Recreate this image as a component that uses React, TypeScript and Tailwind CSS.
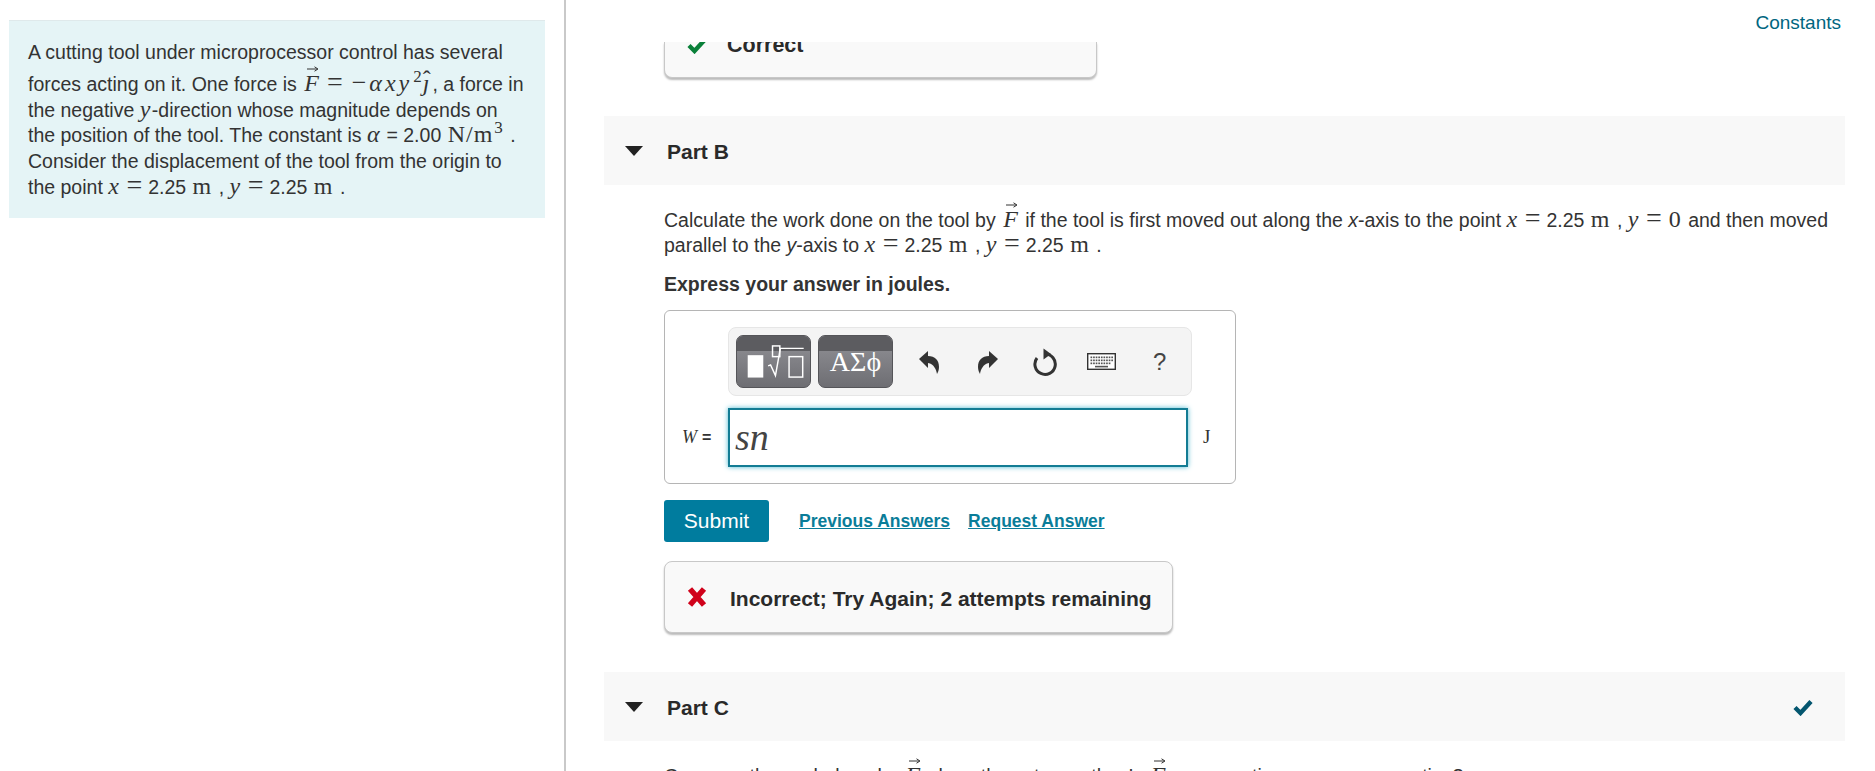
import { ReactNode } from 'react';

const SERIF = "font-['Liberation_Serif',serif]";

function V({ children }: { children: ReactNode }) {
  return <span className={`${SERIF} text-[24px] leading-[0] tracking-[1.5px] italic`}>{children}</span>;
}

function R({ children }: { children: ReactNode }) {
  return <span className={`${SERIF} mx-[1px] text-[24px] leading-[0] tracking-[1px]`}>{children}</span>;
}

function FVec() {
  return (
    <span className={`${SERIF} relative px-[2px] text-[24px] leading-[0] italic`}>
      F
      <svg viewBox="0 0 12 6" className="absolute top-[-4px] left-[5px] h-[6px] w-[12px]">
        <path d="M0 3h10M7.5 .8 11 3 7.5 5.2" fill="none" stroke="#333" strokeWidth="1" />
      </svg>
    </span>
  );
}

function Eq() {
  return <span className={`${SERIF} mx-[6px] text-[28px] leading-[0]`}>=</span>;
}

function Caret() {
  return <span className="h-0 w-0 border-x-[9px] border-t-[10px] border-x-transparent border-t-[#222]" />;
}

function Check({ className }: { className: string }) {
  return (
    <svg viewBox="0 0 20 18" className={className}>
      <path d="M2 9.5 7.5 15 18 3.5" fill="none" stroke="currentColor" strokeWidth="4.4" />
    </svg>
  );
}

function PartHeader({ title, done }: { title: string; done?: boolean }) {
  return (
    <div className="flex h-[69px] items-center bg-[#f8f8f8] pr-[32px] pl-[21px]">
      <Caret />
      <span className="ml-[24px] pt-[2px] text-[21px] font-bold text-[#2a2a2a]">{title}</span>
      {done && <Check className="ml-auto h-[18px] w-[20px] text-[#04566f]" />}
    </div>
  );
}

function RootIcon() {
  return (
    <svg viewBox="0 0 75 51" className="h-[51px] w-[75px]">
      <rect x="11" y="19" width="16" height="23" fill="#fff" />
      <g fill="none" stroke="#fff" strokeWidth="1.5">
        <rect x="36.5" y="9.5" width="7.5" height="11" />
        <path d="M32 30l2.5-1 5 11 5-28h24" />
        <rect x="53.5" y="20.5" width="14" height="21" />
      </g>
    </svg>
  );
}

function ArrowIcon({ flip }: { flip?: boolean }) {
  return (
    <svg viewBox="0 0 20 24" className={`h-[24px] w-[20px] ${flip ? '-scale-x-100' : ''}`}>
      <path d="M0 9 9 1v5c7 0 11 4 11 11 0 3-1 5-2 7-.5-4-3-10-9-11v5z" fill="#333" />
    </svg>
  );
}

function ResetIcon() {
  return (
    <svg viewBox="0 0 26 28" className="h-[28px] w-[26px]">
      <path d="M13 6a10.2 10.2 0 1 1-8 4" fill="none" stroke="#333" strokeWidth="3" />
      <path d="M11.5 0.5l7.5 5.5-7.5 5.5z" fill="#333" />
    </svg>
  );
}

function KeyboardIcon() {
  const rows = [
    { y: 5, n: 9 },
    { y: 8, n: 9 },
    { y: 11, n: 8 },
  ];
  return (
    <svg viewBox="0 0 29 17" className="h-[17px] w-[29px]">
      <rect x="0.7" y="0.7" width="27.6" height="15.6" fill="#fff" stroke="#333" strokeWidth="1.4" />
      {rows.map((row) =>
        Array.from({ length: row.n }).map((_, i) => (
          <rect key={`${row.y}-${i}`} x={3.5 + i * 2.6} y={row.y - 1.5} width="1.7" height="1.7" fill="#555" />
        )),
      )}
      <rect x="8" y="12.8" width="13" height="1.6" fill="#555" />
    </svg>
  );
}

function ToolButton({ children }: { children: ReactNode }) {
  return (
    <div className="relative h-[53px] w-[75px] overflow-hidden rounded-[7px] border border-[#555559] bg-gradient-to-b from-[#929297] to-[#6e6e73]">
      <div className="h-[15px] bg-[#5c5c60]" />
      <div className="absolute inset-0 flex items-center justify-center">{children}</div>
    </div>
  );
}

export default function App() {
  return (
    <div className="flex h-[771px] overflow-hidden bg-white font-['Liberation_Sans',Arial,sans-serif] text-[19.5px] text-[#333]">
      <aside className="h-full w-[566px] shrink-0 border-r-2 border-[#c9c9c9] pt-[20px] pl-[9px]">
        <div className="h-[198px] w-[536px] border-t border-[#dfe9eb] bg-[#e5f4f6] pt-[19px] pl-[19px] leading-[25.8px]">
          <p className="whitespace-nowrap">
            A cutting tool under microprocessor control has several
            <br />
            <span className="inline-block h-[25px] w-0" />
            forces acting on it. One force is <FVec />
            <Eq />
            <span className={`${SERIF} mx-[3px] text-[26px] leading-[0]`}>−</span>
            <span className={`${SERIF} text-[24px] leading-[0] tracking-[3px] italic`}>
              αxy
              <sup className="top-[-9px] mx-[1px] text-[17px] leading-[0] tracking-normal not-italic">2</sup>
              <span className="relative">
                ȷ
                <span className="absolute top-[-3px] left-[0px] leading-[24px] tracking-normal not-italic">ˆ</span>
              </span>
            </span>
            , a force in
            <br />
            the negative <V>y</V>-direction whose magnitude depends on
            <br />
            the position of the tool. The constant is <V>α</V> = 2.00{' '}
            <R>
              N/m
              <sup className="top-[-9px] ml-[1px] text-[17px] leading-[0]">3</sup>
            </R>{' '}
            .
            <br />
            Consider the displacement of the tool from the origin to
            <br />
            the point <V>x</V>
            <Eq />
            2.25 <R>m</R> , <V>y</V>
            <Eq />
            2.25 <R>m</R> .
          </p>
        </div>
      </aside>

      <main className="min-w-0 flex-1 pr-[30px] pl-[38px]">
        <div className="flex h-[42px] items-start justify-end pt-[10px] pr-[4px]">
          <a className="text-[19px] leading-[26px] text-[#00667f]">Constants</a>
        </div>

        <div className="ml-[60px] h-[36px] w-[433px] overflow-hidden rounded-b-[8px] border-x border-b border-[#c8c8c8] bg-[#f9f9f9] pl-[22px] shadow-[0_2px_2px_#bbb]">
          <div className="mt-[-10px] flex items-center">
            <Check className="h-[18px] w-[20px] text-[#0a8039]" />
            <span className="ml-[20px] text-[21.5px] leading-[26px] font-bold text-[#2a2a2a]">Correct</span>
          </div>
        </div>

        <div className="mt-[38px]">
          <PartHeader title="Part B" />
        </div>

        <div className="pl-[60px]">
          <p className="mt-[23px] leading-[25px] whitespace-nowrap">
            Calculate the work done on the tool by <FVec /> if the tool is first moved out along the <em>x</em>-axis
            to the point <V>x</V>
            <Eq />
            2.25 <R>m</R> , <V>y</V>
            <Eq />
            <R>0</R> and then moved
            <br />
            parallel to the <em>y</em>-axis to <V>x</V>
            <Eq />
            2.25 <R>m</R> , <V>y</V>
            <Eq />
            2.25 <R>m</R> .
          </p>
          <p className="mt-[13px] leading-[26px] font-bold">Express your answer in joules.</p>

          <div className="mt-[13px] h-[174px] w-[572px] rounded-[6px] border border-[#b5b5b5] pt-[16px] pl-[63px]">
            <div className="flex h-[69px] w-[464px] items-center rounded-[8px] border border-[#e6e6e6] bg-[#f4f4f4] pl-[7px]">
              <ToolButton>
                <RootIcon />
              </ToolButton>
              <div className="ml-[7px]">
                <ToolButton>
                  <span className={`${SERIF} text-[28px] text-white`}>ΑΣϕ</span>
                </ToolButton>
              </div>
              <div className="ml-[26px]">
                <ArrowIcon />
              </div>
              <div className="ml-[39px]">
                <ArrowIcon flip />
              </div>
              <div className="ml-[34px]">
                <ResetIcon />
              </div>
              <div className="ml-[29px]">
                <KeyboardIcon />
              </div>
              <span className="ml-[37px] text-[24px] text-[#444]">?</span>
            </div>

            <div className="mt-[12px] flex items-center">
              <span className="ml-[-46px] w-[46px] text-[18px]">
                <span className={`${SERIF} italic`}>W</span> <b className="text-[16px]">=</b>
              </span>
              <div className="flex h-[59px] w-[460px] items-center border-2 border-[#137c94] pl-[5px] shadow-[0_0_5px_#4fb9d0]">
                <span className={`${SERIF} text-[38px] text-[#444] italic`}>sn</span>
              </div>
              <span className={`${SERIF} ml-[15px] text-[19px]`}>J</span>
            </div>
          </div>

          <div className="mt-[16px] flex items-center">
            <button className="h-[42px] w-[105px] rounded-[3px] bg-[#007c9e] text-[21px] text-white">Submit</button>
            <a className="ml-[30px] text-[17.5px] font-bold text-[#0a7d99] underline">Previous Answers</a>
            <a className="ml-[18px] text-[17.5px] font-bold text-[#0a7d99] underline">Request Answer</a>
          </div>

          <div className="mt-[19px] flex h-[72px] w-[509px] items-center rounded-[8px] border border-[#c8c8c8] bg-[#f9f9f9] pl-[22px] shadow-[0_2px_2px_#bbb]">
            <svg viewBox="0 0 20 22" className="h-[22px] w-[20px] text-[#d0021b]">
              <path d="M3 3l14 16M17 3 3 19" fill="none" stroke="currentColor" strokeWidth="5.6" />
            </svg>
            <span className="ml-[23px] pt-[3px] text-[21px] font-bold text-[#2a2a2a]">Incorrect; Try Again; 2 attempts remaining</span>
          </div>
        </div>

        <div className="mt-[39px]">
          <PartHeader title="Part C" done />
        </div>

        <p className="mt-[22px] pl-[60px] leading-[26px] whitespace-nowrap">
          Compare the work done by <FVec /> along these two paths. Is <FVec /> conservative or nonconservative?
        </p>
      </main>
    </div>
  );
}
